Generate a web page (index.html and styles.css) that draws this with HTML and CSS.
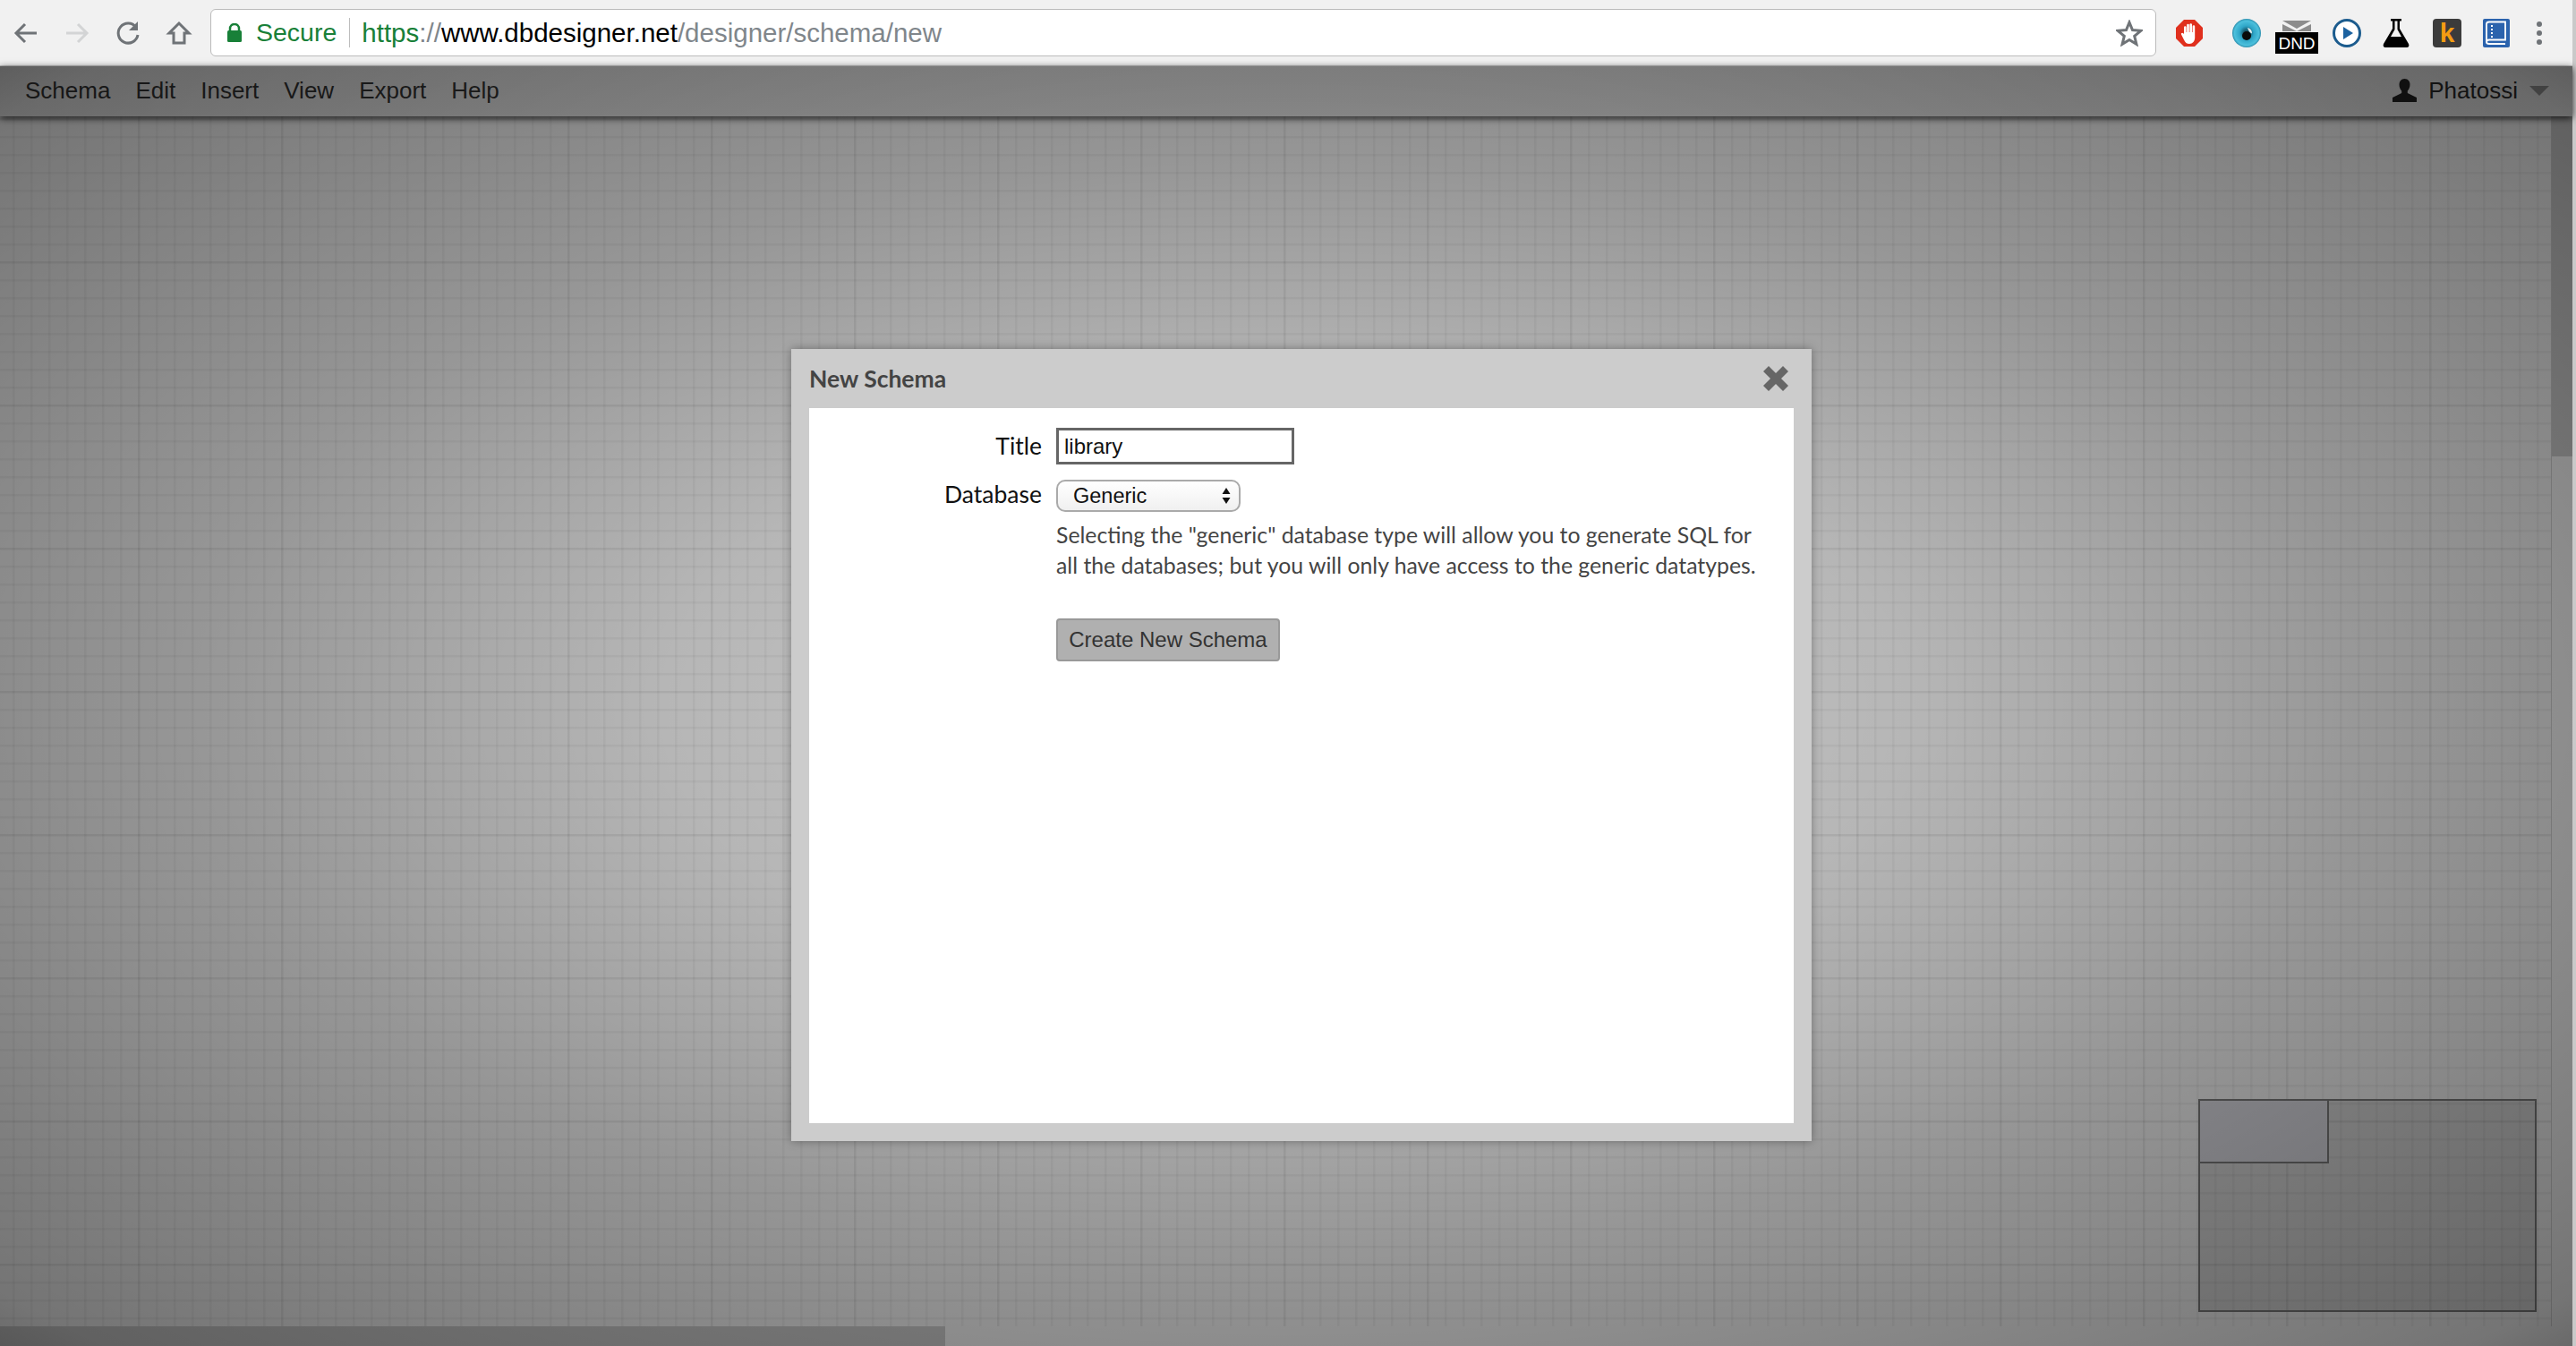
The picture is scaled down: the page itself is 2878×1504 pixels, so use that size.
FILE: index.html
```html
<!DOCTYPE html>
<html lang="en">
<head>
  <meta charset="UTF-8">
  <title>New Schema - DB Designer</title>
  <link rel="stylesheet" href="styles.css">
</head>
<body>
  <div class="app">
    <div class="toolbar">
      <div class="nav">
        <svg class="nav-icon" viewBox="0 0 30 30"><path d="M27 15H5M14 5L4 15l10 10" fill="none" stroke="#6f7377" stroke-width="3"/></svg>
        <svg class="nav-icon" viewBox="0 0 30 30"><path d="M3 15h22M16 5l10 10-10 10" fill="none" stroke="#d3d4d5" stroke-width="3"/></svg>
        <svg class="nav-icon" viewBox="0 0 30 30"><path d="M24 8.500A11 11 0 1 0 26 17" fill="none" stroke="#6f7377" stroke-width="3"/><path d="M26 2v10H16z" fill="#6f7377"/></svg>
        <svg class="nav-icon" viewBox="0 0 30 30"><path d="M15 4L4 15h5v11h12V15h5z" fill="none" stroke="#6f7377" stroke-width="3"/></svg>
      </div>
      <div class="omnibox">
        <svg class="lock" viewBox="0 0 16 21"><path d="M3 9V6a5 5 0 0 1 10 0v3" fill="none" stroke="#188038" stroke-width="2.500"/><rect y="8" width="16" height="13" rx="1.500" fill="#188038"/></svg>
        <span class="secure">Secure</span>
        <span class="url"><span class="scheme">https</span><span class="path">://</span><span class="host">www.dbdesigner.net</span><span class="path">/designer/schema/new</span></span>
        <svg class="star" viewBox="0 0 30 30"><path d="M15 3l3.500 8.600 9.300.700-7.100 6 2.200 9L15 22.400l-7.900 4.900 2.200-9-7.100-6 9.300-.700z" fill="none" stroke="#6f7377" stroke-width="3"/></svg>
      </div>
      <div class="extensions">
        <svg class="ext ext-adblock" viewBox="0 0 30 30"><path d="M9 0h12l9 9v12l-9 9H9l-9-9V9z" fill="#e0301e"/><path d="M9 16V8.500a1.300 1.300 0 0 1 2.600 0V14h.6V6a1.300 1.300 0 0 1 2.600 0v8h.6V5.500a1.300 1.300 0 0 1 2.600 0V14h.6V7.500a1.300 1.300 0 0 1 2.600 0V20c0 4-2.500 7-6.200 7-3 0-4.500-1.500-6-4.500L6 16.500c-.7-1.500 1.300-2.500 2.200-1.200z" fill="#fff"/></svg>
        <svg class="ext ext-eye" viewBox="0 0 32 32"><defs><radialGradient id="iris"><stop offset="0.200" stop-color="#16586c"/><stop offset="0.500" stop-color="#2fa6c8"/><stop offset="0.850" stop-color="#4cc0dc"/><stop offset="1" stop-color="#2e8fae"/></radialGradient></defs><circle cx="16" cy="16" r="16" fill="url(#iris)"/><circle cx="16" cy="19" r="5" fill="#0a0a0a"/><path d="M17 10a6 6 0 0 1 5 6.500c-2-.5-4-3-5-6.500z" fill="#e6eef0"/></svg>
        <div class="ext-dnd">
          <svg class="dnd-mail" viewBox="0 0 32 12"><path d="M0 0h32L16 9zM0 4l16 8 16-8v8H0z" fill="#8c8c8c"/></svg>
          <span class="dnd-badge">DND</span>
        </div>
        <svg class="ext ext-play" viewBox="0 0 32 32"><circle cx="16" cy="16" r="14.500" fill="#fff" stroke="#1c5c8e" stroke-width="3"/><path d="M12 9l11 7-11 7z" fill="#1c62a0"/></svg>
        <svg class="ext ext-flask" viewBox="0 0 30 32"><path d="M9 0h12v2.500h-2V11l10 17c1 2 0 4-2 4H3c-2 0-3-2-2-4l10-17V2.500H9zM13.500 2.500V12L9 20h12l-4.500-8V2.500z" fill="#000" fill-rule="evenodd"/></svg>
        <div class="ext-k">k</div>
        <svg class="ext ext-book" viewBox="0 0 30 32"><rect width="30" height="32" rx="2" fill="#2b63ad"/><path d="M7 3.500h18v20H7c-1.500 0-3 1-3 2.500V6c0-1.500 1.500-2.500 3-2.500z" fill="none" stroke="#fff" stroke-width="1.800"/><path d="M4 26c0 1.500 1.500 2 3 2h18" fill="none" stroke="#fff" stroke-width="1.800"/><path d="M9 7h2v2H9zM9 11h2v2H9zM9 15h2v2H9zM9 19h2v2H9z" fill="#fff"/></svg>
        <div class="ext-menu"><i></i><i></i><i></i></div>
      </div>
    </div>

    <div class="workspace">
      <div class="menubar">
        <span class="menu-item">Schema</span>
        <span class="menu-item">Edit</span>
        <span class="menu-item">Insert</span>
        <span class="menu-item">View</span>
        <span class="menu-item">Export</span>
        <span class="menu-item">Help</span>
        <div class="user">
          <svg class="user-icon" viewBox="0 0 27 26"><path d="M13.500 0c4 0 6 3 6 6.500 0 3-1.200 5.500-2.700 7v2.500L27 21v5H0v-5l10.200-5v-2.500C8.700 12 7.500 9.500 7.500 6.500 7.500 3 9.500 0 13.500 0z" fill="#1c1c1c"/></svg>
          <span class="user-name">Phatossi</span>
          <span class="caret"></span>
        </div>
      </div>
      <div class="stage">
        <div class="stage-main">
          <div class="grid"></div>
          <div class="vscroll"><div class="vthumb"></div></div>
        </div>
        <div class="hscroll"><div class="hthumb"></div></div>
      </div>
      <div class="minimap"><div class="minimap-view"></div></div>
      <div class="dim"></div>
    </div>

    <div class="modal">
      <div class="modal-head">
        <span class="modal-title">New Schema</span>
        <svg class="modal-close" viewBox="0 0 30 30"><path d="M7 1l8 8 8-8 6 6-8 8 8 8-6 6-8-8-8 8-6-6 8-8-8-8z" fill="#666"/></svg>
      </div>
      <div class="modal-body">
        <div class="form">
          <label class="form-label form-label-title">Title</label>
          <input class="text-input" type="text" value="library">
          <label class="form-label form-label-db">Database</label>
          <div class="select-box"><span>Generic</span><svg class="select-arrows" viewBox="0 0 10 18"><path d="M5 0l4.500 7h-9zM5 18l-4.500-7h9z" fill="#111"/></svg></div>
          <p class="help">Selecting the "generic" database type will allow you to generate SQL for<br>all the databases; but you will only have access to the generic datatypes.</p>
          <button class="create-btn">Create New Schema</button>
        </div>
      </div>
    </div>
  </div>
  <div class="edge"></div>
</body>
</html>
```

FILE: styles.css
```css
html, body {
  margin: 0;
  height: 100%;
}
body {
  display: flex;
  overflow: hidden;
  font-family: "Liberation Sans", sans-serif;
  background: #fff;
}
.app {
  flex: 1;
  min-width: 0;
  display: flex;
  flex-direction: column;
  position: relative;
}
.edge {
  width: 4px;
  background: #c9c9c9;
}

/* browser chrome */
.toolbar {
  height: 74px;
  flex: none;
  box-sizing: border-box;
  display: flex;
  align-items: center;
  background: #f1f1f1;
  border-bottom: 1px solid #c4c4c4;
}
.nav {
  width: 235px;
  flex: none;
  display: flex;
  gap: 27px;
  padding-left: 14px;
  box-sizing: border-box;
}
.nav-icon {
  width: 30px;
  height: 30px;
}
.omnibox {
  width: 2174px;
  height: 53px;
  flex: none;
  box-sizing: border-box;
  display: flex;
  align-items: center;
  background: #fff;
  border: 1px solid #bbb;
  border-radius: 6px;
  padding: 0 14px 0 18px;
  font-size: 28.5px;
}
.lock {
  width: 16px;
  height: 21px;
  margin-right: 16px;
}
.secure {
  color: #188038;
  padding-right: 14px;
  margin-right: 13px;
  border-right: 1px solid #bdbdbd;
}
.url {
  flex: 1;
  font-size: 29.5px;
  white-space: nowrap;
}
.scheme { color: #188038; }
.host { color: #000; }
.path { color: #80868b; }
.star {
  width: 30px;
  height: 30px;
}
.extensions {
  flex: 1;
  display: flex;
  align-items: center;
  height: 100%;
  position: relative;
  padding-left: 22px;
}
.ext {
  width: 32px;
  height: 32px;
  flex: none;
}
.ext-adblock { width: 30px; height: 30px; margin-right: 33px; }
.ext-eye { margin-right: 16px; }
.ext-dnd {
  width: 48px;
  height: 37px;
  flex: none;
  margin: 9px 16px 0 0;
  display: flex;
  flex-direction: column;
  align-items: center;
}
.dnd-mail {
  width: 32px;
  height: 12px;
  flex: none;
  margin-bottom: 1px;
}
.dnd-badge {
  width: 48px;
  height: 24px;
  background: #000;
  color: #fff;
  font-size: 19px;
  line-height: 25px;
  text-align: center;
}
.ext-play { margin-right: 24px; }
.ext-flask { width: 30px; margin-right: 26px; }
.ext-k {
  width: 32px;
  height: 32px;
  flex: none;
  margin-right: 24px;
  background: #3b3b3b;
  border-radius: 4px;
  color: #f39c12;
  font-size: 30px;
  font-weight: bold;
  line-height: 32px;
  text-align: center;
}
.ext-book { width: 30px; margin-right: 30px; }
.ext-menu {
  display: flex;
  flex-direction: column;
  gap: 4px;
}
.ext-menu i {
  width: 6px;
  height: 6px;
  border-radius: 50%;
  background: #6f7377;
}

/* app under the dialog */
.workspace {
  flex: 1;
  min-height: 0;
  position: relative;
  display: flex;
  flex-direction: column;
}
.menubar {
  height: 56px;
  flex: none;
  display: flex;
  align-items: center;
  gap: 28px;
  padding-left: 28px;
  padding-right: 26px;
  padding-bottom: 2px;
  box-sizing: border-box;
  background: linear-gradient(#bcbcbc, #c2c2c2);
  box-shadow: 0 2px 8px rgba(0, 0, 0, 0.8);
  font-size: 26px;
  color: #2a2a2a;
  position: relative;
  z-index: 1;
}
.user {
  margin-left: auto;
  display: flex;
  align-items: center;
}
.user-icon {
  width: 27px;
  height: 26px;
  margin-right: 13px;
}
.user-name { color: #222; }
.caret {
  width: 0;
  height: 0;
  margin: 0 0 0 13px;
  border-left: 11px solid transparent;
  border-right: 11px solid transparent;
  border-top: 11px solid #7a7a7a;
}
.stage {
  flex: 1;
  min-height: 0;
  display: flex;
  flex-direction: column;
}
.stage-main {
  flex: 1;
  min-height: 0;
  display: flex;
}
.grid {
  flex: 1;
  background-color: #d4d4d4;
  background-image:
    linear-gradient(90deg, rgba(0, 0, 0, 0.03) 2px, transparent 3px),
    linear-gradient(rgba(0, 0, 0, 0.03) 2px, transparent 3px),
    linear-gradient(90deg, rgba(0, 0, 0, 0.04) 2px, transparent 3px),
    linear-gradient(rgba(0, 0, 0, 0.04) 2px, transparent 3px);
  background-size: 160px 160px, 160px 160px, 20px 20px, 20px 20px;
  background-position: 154px 0, 0 2px, 14px 0, 0 2px;
}
.vscroll {
  width: 23px;
  flex: none;
  background: #d4d4d4;
  border-left: 1px solid #b4b4b4;
}
.vthumb {
  height: 380px;
  background: #b0b0b0;
}
.hscroll {
  height: 22px;
  flex: none;
  background: #d4d4d4;
}
.hthumb {
  width: 1056px;
  height: 100%;
  background: #b0b0b0;
}
.minimap {
  position: absolute;
  right: 40px;
  bottom: 38px;
  width: 378px;
  height: 238px;
  box-sizing: border-box;
  border: 2px solid #6a6a6a;
  background: rgba(0, 0, 0, 0.12);
}
.minimap-view {
  width: 144px;
  height: 70px;
  box-sizing: border-box;
  border-right: 2px solid #6a6a6a;
  border-bottom: 2px solid #6a6a6a;
  background: #bcbcc2;
}
.dim {
  position: absolute;
  inset: 0;
  z-index: 2;
  background: radial-gradient(ellipse at 50% 50%, rgba(0, 0, 0, 0.03) 0, rgba(0, 0, 0, 0.14) 34%, rgba(0, 0, 0, 0.29) 60%, rgba(0, 0, 0, 0.45) 96%, rgba(0, 0, 0, 0.5) 100%);
}

/* dialog */
.modal {
  position: absolute;
  left: 884px;
  top: 390px;
  width: 1140px;
  height: 885px;
  z-index: 3;
  display: flex;
  flex-direction: column;
  background: #ccc;
  padding: 0 20px 20px;
  box-sizing: border-box;
  box-shadow: 0 0 10px rgba(0, 0, 0, 0.35);
}
.modal-head {
  height: 66px;
  flex: none;
  display: flex;
  align-items: center;
  justify-content: space-between;
}
.modal-title {
  font-family: "Lato", sans-serif;
  font-weight: 700;
  font-size: 26.500px;
  color: #444;
}
.modal-close {
  width: 30px;
  height: 30px;
  margin-right: 5px;
}
.modal-body {
  flex: 1;
  background: #fff;
}
.form {
  display: grid;
  grid-template-columns: 260px 1fr;
  column-gap: 16px;
  padding-top: 22px;
}
.form-label {
  text-align: right;
  font-family: "Lato", sans-serif;
  font-size: 26.500px;
  color: #111;
}
.form-label-title { line-height: 41px; }
.form-label-db { line-height: 36px; margin-top: 15px; padding-bottom: 2px; }
.text-input {
  width: 266px;
  height: 41px;
  box-sizing: border-box;
  border: 3px solid #666;
  padding: 0 6px;
  font: 24px "Liberation Sans", sans-serif;
  color: #111;
  outline: none;
}
.select-box {
  width: 206px;
  height: 36px;
  margin-top: 17px;
  box-sizing: border-box;
  display: flex;
  align-items: center;
  justify-content: space-between;
  padding: 0 9px 0 17px;
  background: linear-gradient(#fff, #f0f0f0);
  border: 2px solid #aaa;
  border-radius: 10px;
  font-size: 23.500px;
  color: #111;
}
.select-arrows {
  width: 10px;
  height: 18px;
}
.help {
  grid-column: 2;
  margin: 9px 0 0;
  font-family: "Lato", sans-serif;
  font-size: 24.800px;
  line-height: 34px;
  color: #444;
  white-space: nowrap;
}
.create-btn {
  grid-column: 2;
  justify-self: start;
  width: 250px;
  height: 48px;
  margin-top: 42px;
  box-sizing: border-box;
  background: #b0b0b0;
  border: 2px solid #999;
  border-radius: 4px;
  padding: 0;
  font: 24px "Liberation Sans", sans-serif;
  color: #333;
}
```
